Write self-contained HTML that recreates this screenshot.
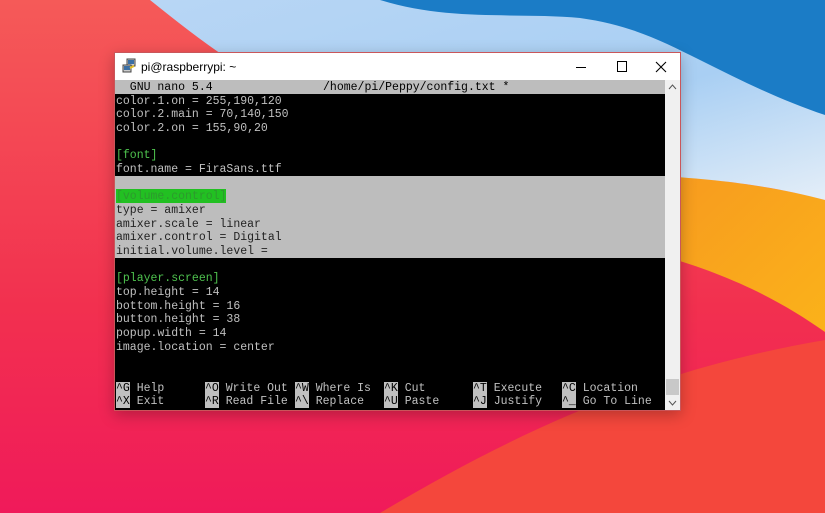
<!DOCTYPE html>
<html><head><meta charset="utf-8"><style>
*{margin:0;padding:0;box-sizing:border-box}
body{width:825px;height:513px;overflow:hidden;position:relative;background:#f23a55}
#bg{position:absolute;left:0;top:0}
.win{position:absolute;left:114px;top:52px;width:567px;height:359px;background:#fff;border:1px solid #c9565a;box-shadow:0 4px 14px rgba(0,0,0,.25)}
.title{position:absolute;left:0;top:0;width:565px;height:27px;background:#fff;font:12px "Liberation Sans",sans-serif;color:#000}
.title .t{position:absolute;left:26px;top:7px}
.term{position:absolute;left:0;top:27px;width:550px;height:330px;background:#000;font:11.5px/13.67px "Liberation Mono",monospace;color:#c0c0c0;white-space:pre;overflow:hidden}
.r{position:absolute;left:1px;height:13.67px;padding-top:1px}
.c{position:absolute;height:13.67px;padding-top:1px}
.g{color:#4ec24e}
.hl{position:absolute;left:0;width:550px;background:#bdbdbd}
.k{background:#c0c0c0;color:#000}
.sb{position:absolute;left:550px;top:27px;width:15px;height:330px;background:#f0f0f0}
</style></head><body>
<svg id="bg" width="825" height="513" viewBox="0 0 825 513">
<defs>
<linearGradient id="rd" x1="0" y1="0" x2="0" y2="1"><stop offset="0" stop-color="#f55a58"/><stop offset="0.6" stop-color="#f2304f"/><stop offset="1" stop-color="#f01a5a"/></linearGradient>
<linearGradient id="or" x1="0" y1="0" x2="1" y2="1"><stop offset="0" stop-color="#f79a1f"/><stop offset="1" stop-color="#fbb21a"/></linearGradient>
<linearGradient id="lb" x1="0" y1="0" x2="1" y2="1"><stop offset="0" stop-color="#b8d6f5"/><stop offset="0.6" stop-color="#a9cff3"/><stop offset="1" stop-color="#e4eef8"/></linearGradient>
</defs>
<rect width="825" height="513" fill="url(#rd)"/>
<path d="M380 513 C520 430 650 370 825 340 L825 513 Z" fill="#f4473c"/>
<path d="M660 175 C730 180 790 190 825 200 L825 332 C780 300 730 275 660 255 Z" fill="url(#or)"/>
<path d="M150 0 L825 0 L825 200 C780 188 730 180 660 176 L660 60 L230 60 C200 40 175 20 150 0 Z" fill="url(#lb)"/>
<path d="M380 0 L825 0 L825 115 C780 100 740 80 700 60 C660 40 630 25 580 18 C520 12 450 22 380 0 Z" fill="#1b7cc6"/>
</svg>
<div class="win">
<div class="title">
<svg style="position:absolute;left:7px;top:5px" width="16" height="16" viewBox="0 0 16 16"><rect x="5" y="1" width="8" height="7" fill="#ccc" stroke="#444"/><rect x="6" y="2" width="6" height="4" fill="#3a6ea5"/><rect x="1" y="7" width="8" height="7" fill="#ccc" stroke="#444"/><rect x="2" y="8" width="6" height="4" fill="#3a6ea5"/><path d="M8 10 L12 8" stroke="#e8c020" stroke-width="2"/></svg>
<span class="t">pi@raspberrypi: ~</span>
<svg style="position:absolute;left:460px;top:6px" width="100" height="16" viewBox="0 0 100 16"><line x1="1" y1="8.5" x2="11" y2="8.5" stroke="#000"/><rect x="42.5" y="2.5" width="9" height="10" fill="none" stroke="#000"/><path d="M81 3 L91 13 M91 3 L81 13" stroke="#000" stroke-width="1.1"/></svg>
</div>
<div class="term">
<div class="hl" style="top:0;height:13.67px"></div>
<div class="hl" style="top:95.7px;height:82px"></div>
<div class="r" style="top:0;color:#000">  GNU nano 5.4                /home/pi/Peppy/config.txt *</div>
<div class="r" style="top:13.67px">color.1.on = 255,190,120</div>
<div class="r" style="top:27.34px">color.2.main = 70,140,150</div>
<div class="r" style="top:41px">color.2.on = 155,90,20</div>
<div class="r g" style="top:68.35px">[font]</div>
<div class="r" style="top:82px">font.name = FiraSans.ttf</div>
<div class="r" style="top:109.4px;color:#2d9a2d;background:#22c022">[volume.control]</div>
<div class="r" style="top:123px;color:#222">type = amixer</div>
<div class="r" style="top:136.7px;color:#222">amixer.scale = linear</div>
<div class="r" style="top:150.4px;color:#222">amixer.control = Digital</div>
<div class="r" style="top:164px;color:#222">initial.volume.level =</div>
<div class="r g" style="top:191.4px">[player.screen]</div>
<div class="r" style="top:205px">top.height = 14</div>
<div class="r" style="top:218.7px">bottom.height = 16</div>
<div class="r" style="top:232.4px">button.height = 38</div>
<div class="r" style="top:246px">popup.width = 14</div>
<div class="r" style="top:259.7px">image.location = center</div>
<div class="c" style="top:300.7px;left:1px"><span class="k">^G</span> Help</div>
<div class="c" style="top:314.4px;left:1px"><span class="k">^X</span> Exit</div>
<div class="c" style="top:300.7px;left:90px"><span class="k">^O</span> Write Out</div>
<div class="c" style="top:314.4px;left:90px"><span class="k">^R</span> Read File</div>
<div class="c" style="top:300.7px;left:180px"><span class="k">^W</span> Where Is</div>
<div class="c" style="top:314.4px;left:180px"><span class="k">^\</span> Replace</div>
<div class="c" style="top:300.7px;left:269px"><span class="k">^K</span> Cut</div>
<div class="c" style="top:314.4px;left:269px"><span class="k">^U</span> Paste</div>
<div class="c" style="top:300.7px;left:358px"><span class="k">^T</span> Execute</div>
<div class="c" style="top:314.4px;left:358px"><span class="k">^J</span> Justify</div>
<div class="c" style="top:300.7px;left:447px"><span class="k">^C</span> Location</div>
<div class="c" style="top:314.4px;left:447px"><span class="k">^_</span> Go To Line</div>
</div>
<div class="sb">
<svg style="position:absolute;left:3px;top:3px" width="9" height="8"><path d="M1 6 L4.5 2 L8 6" fill="none" stroke="#555"/></svg>
<div style="position:absolute;left:1px;top:299px;width:13px;height:16px;background:#c8c8c8"></div>
<svg style="position:absolute;left:3px;top:319px" width="9" height="8"><path d="M1 2 L4.5 6 L8 2" fill="none" stroke="#555"/></svg>
</div>
</div>
</body></html>
